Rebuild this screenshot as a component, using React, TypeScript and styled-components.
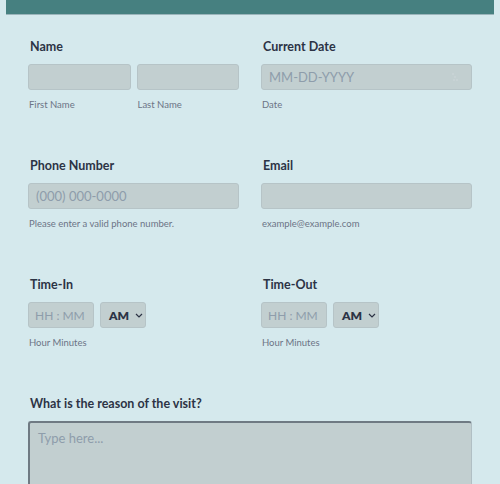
import React from "react";
import styled, { createGlobalStyle } from "styled-components";

const GlobalStyle = createGlobalStyle`
  body {
    margin: 0;
    background: #d5e9ed;
    font-family: Lato, "Noto Sans", sans-serif;
  }
`;

const Card = styled.div`
  margin: 0 6px;
`;

const Header = styled.div`
  height: 14px;
  background: #468080;
  border-bottom: 1px solid #9bb5bb;
`;

const Form = styled.form`
  padding: 23px 22px 0 22px;
`;

const Row = styled.div<{ $single?: boolean }>`
  display: grid;
  grid-template-columns: ${(p) => (p.$single ? "1fr" : "1fr 1fr")};
  column-gap: 22px;
  margin-bottom: 45px;
`;

const Field = styled.div`
  display: flex;
  flex-direction: column;
`;

const Label = styled.label`
  font-size: 12.5px;
  line-height: 18px;
  font-weight: 700;
  color: #2c3345;
  padding-left: 2px;
  margin-bottom: 8px;
`;

const Controls = styled.div`
  display: flex;
  gap: 6px;
`;

const SubGroup = styled.div`
  display: flex;
  flex-direction: column;
  flex: 1;
`;

const Input = styled.input<{ $width?: number; $small?: boolean }>`
  box-sizing: border-box;
  height: 26px;
  width: ${(p) => (p.$width ? `${p.$width}px` : "100%")};
  padding: 0 ${(p) => (p.$small ? "6px" : "7px")};
  background: #c2cfd0;
  border: 1px solid #b6c4c7;
  border-radius: 3px;
  font-family: Lato, "Noto Sans", sans-serif;
  font-size: ${(p) => (p.$small ? "12px" : "13px")};
  color: #2c3345;
  outline: none;
  &::placeholder {
    color: #8e9dab;
  }
`;

const DateWrap = styled.div`
  position: relative;
`;

const DateIcon = styled.svg`
  position: absolute;
  right: 12px;
  top: 8px;
`;

const Select = styled.div`
  box-sizing: border-box;
  height: 26px;
  width: 46px;
  display: flex;
  align-items: center;
  gap: 6px;
  padding-left: 8px;
  background: #c2cfd0;
  border: 1px solid #b6c4c7;
  border-radius: 3px;
  font-size: 12px;
  font-weight: 800;
  color: #2c3345;
`;

const SubLabel = styled.span`
  font-size: 9.5px;
  line-height: 14px;
  color: #6c7486;
  padding-left: 1px;
  margin-top: 8px;
`;

const TextArea = styled.textarea`
  box-sizing: border-box;
  width: 100%;
  height: 90px;
  padding: 7px 8px;
  background: #c2cfd0;
  border: 1px solid #b0bfc4;
  border-top: 2px solid #6f7a83;
  border-left: 2px solid #6f7a83;
  border-radius: 3px;
  font-family: Lato, "Noto Sans", sans-serif;
  font-size: 13px;
  resize: none;
  outline: none;
  &::placeholder {
    color: #8e9dab;
  }
`;

const Chevron = () => (
  <svg width="8" height="5" viewBox="0 0 8 5">
    <path d="M1 1l3 3 3-3" fill="none" stroke="#2c3345" strokeWidth="1.2" />
  </svg>
);

const TimeField: React.FC<{ label: string }> = ({ label }) => (
  <Field>
    <Label>{label}</Label>
    <Controls>
      <Input $width={66} $small placeholder="HH : MM" />
      <Select>
        AM <Chevron />
      </Select>
    </Controls>
    <SubLabel>Hour Minutes</SubLabel>
  </Field>
);

const App: React.FC = () => {
  return (
    <>
      <GlobalStyle />
      <Card>
        <Header />
        <Form>
          <Row>
            <Field>
              <Label>Name</Label>
              <Controls>
                <SubGroup>
                  <Input />
                  <SubLabel>First Name</SubLabel>
                </SubGroup>
                <SubGroup>
                  <Input />
                  <SubLabel>Last Name</SubLabel>
                </SubGroup>
              </Controls>
            </Field>
            <Field>
              <Label>Current Date</Label>
              <DateWrap>
                <Input placeholder="MM-DD-YYYY" />
                <DateIcon width="10" height="10" viewBox="0 0 10 10">
                  <circle cx="3" cy="2" r="0.7" fill="#d3dcdd" />
                  <circle cx="5" cy="5" r="0.7" fill="#d3dcdd" />
                  <circle cx="7" cy="8" r="0.7" fill="#d3dcdd" />
                  <circle cx="4" cy="8" r="0.7" fill="#d3dcdd" />
                </DateIcon>
              </DateWrap>
              <SubLabel>Date</SubLabel>
            </Field>
          </Row>
          <Row>
            <Field>
              <Label>Phone Number</Label>
              <Input placeholder="(000) 000-0000" />
              <SubLabel>Please enter a valid phone number.</SubLabel>
            </Field>
            <Field>
              <Label>Email</Label>
              <Input />
              <SubLabel>example@example.com</SubLabel>
            </Field>
          </Row>
          <Row>
            <TimeField label="Time-In" />
            <TimeField label="Time-Out" />
          </Row>
          <Row $single>
            <Field>
              <Label>What is the reason of the visit?</Label>
              <TextArea placeholder="Type here..." />
            </Field>
          </Row>
        </Form>
      </Card>
    </>
  );
};

export default App;
